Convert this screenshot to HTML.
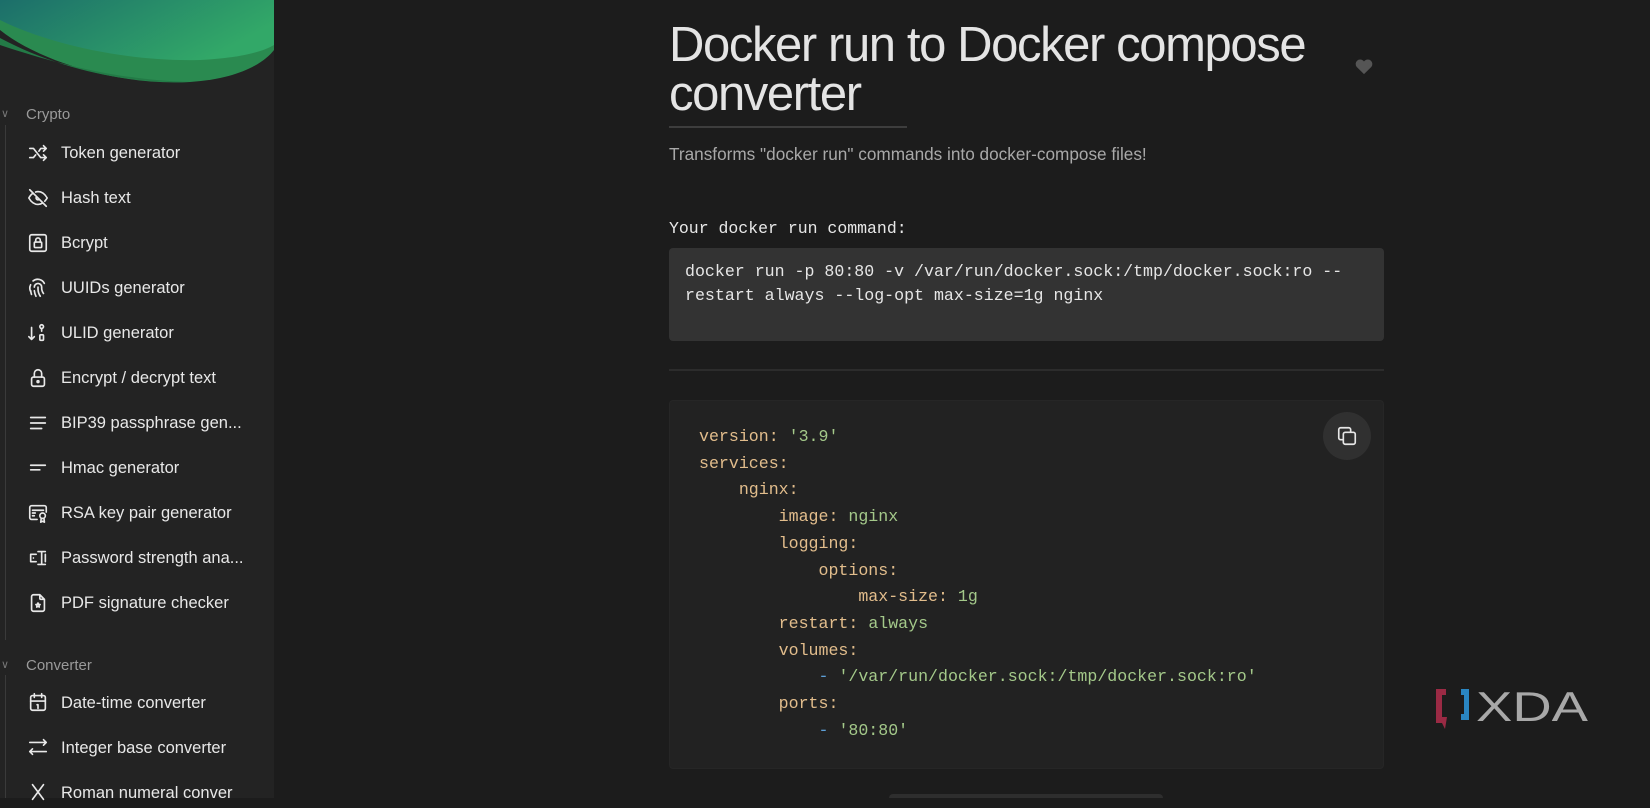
<!DOCTYPE html>
<html><head><meta charset="utf-8"><style>
*{margin:0;padding:0;box-sizing:border-box}
body{width:1650px;height:798px;overflow:hidden;background:#1c1c1c;font-family:"Liberation Sans",sans-serif;color:#e6e6e6;position:relative}
.side{position:absolute;left:0;top:0;width:274px;height:798px;background:#232323}
.vl{position:absolute;left:5px;width:1px;background:#3a3a3a}
.hd{position:absolute;left:26px;font-size:15px;color:#9a9a9a}
.chev{position:absolute;left:1px;font-size:11px;color:#777}
.it{position:absolute;left:61px;font-size:16.5px;color:#e8e8e8;white-space:nowrap}
.ic{position:absolute;left:27px;width:22px;height:22px}
.ic svg{width:22px;height:22px;fill:none;stroke:#e8e8e8;stroke-width:1.8;stroke-linecap:round;stroke-linejoin:round}
.mono{font-family:"Liberation Mono","DejaVu Sans Mono",monospace}
.k{color:#e2bd8c}.s{color:#a4c98a}.d{color:#5ea0d8}
</style></head><body>
<div class="side">
<svg width="274" height="90" style="position:absolute;left:0;top:0">
<defs><linearGradient id="g" x1="0" y1="0" x2="1" y2="0.4"><stop offset="0" stop-color="#1c6e6a"/><stop offset="1" stop-color="#32a868"/></linearGradient></defs>
<path d="M0 30 C40 62 120 86 190 82 C240 79 265 62 274 50 L274 0 L0 0Z" fill="#2a8a50"/>
<path d="M0 20 C50 45 130 62 200 60 C240 58 262 52 274 45 L274 0 L0 0Z" fill="url(#g)"/>
<path d="M0 38 C60 70 130 84 190 82 C120 80 60 65 0 45Z" fill="#237a46"/>
</svg>
<div class="vl" style="top:125px;height:515px"></div>
<div class="vl" style="top:675px;height:123px"></div>
<div class="chev" style="top:107px">&#8744;</div><div class="hd" style="top:106px">Crypto</div>
<div class="ic" style="top:142px"><svg viewBox="0 0 24 24"><path d="M3 7h4l8 10h5M3 17h4l2.5-3M13 10l2-3h5M18 4l3 3-3 3M18 14l3 3-3 3"/></svg></div><div class="it" style="top:144px">Token generator</div>
<div class="ic" style="top:187px"><svg viewBox="0 0 24 24"><path d="M3 3l18 18M10.5 10.6a2 2 0 002.9 2.8M9.4 5.5A9 9 0 0112 5c4 0 7.3 2.3 10 7-.8 1.4-1.7 2.5-2.6 3.5M6.6 6.6C4.8 7.8 3.3 9.6 2 12c2.7 4.7 6 7 10 7 1.7 0 3.3-.4 4.7-1.3"/></svg></div><div class="it" style="top:189px">Hash text</div>
<div class="ic" style="top:232px"><svg viewBox="0 0 24 24"><rect x="3" y="3" width="18" height="18" rx="2"/><rect x="8" y="11" width="8" height="6" rx="1"/><path d="M9.5 11V9a2.5 2.5 0 015 0v2"/></svg></div><div class="it" style="top:234px">Bcrypt</div>
<div class="ic" style="top:277px"><svg viewBox="0 0 24 24"><path d="M18.9 7A8 8 0 006.6 4.3M4 8.5A8 8 0 004 16M8 11a4 4 0 018 0v1a10 10 0 002 6M12 11v2a14 14 0 002.5 8M8 15a18 18 0 001.8 6M4.9 19a22 22 0 01-.9-4"/></svg></div><div class="it" style="top:279px">UUIDs generator</div>
<div class="ic" style="top:322px"><svg viewBox="0 0 24 24"><path d="M5 6v13M2 16l3 3 3-3M16 3a2 2 0 110 4h-1M16 3a2 2 0 000 4v3M15 14h2a1 1 0 011 1v4a1 1 0 01-1 1h-2a1 1 0 01-1-1v-4a1 1 0 011-1z"/></svg></div><div class="it" style="top:324px">ULID generator</div>
<div class="ic" style="top:367px"><svg viewBox="0 0 24 24"><rect x="5" y="11" width="14" height="10" rx="2"/><circle cx="12" cy="16" r="1"/><path d="M8 11V7a4 4 0 018 0v4"/></svg></div><div class="it" style="top:369px">Encrypt / decrypt text</div>
<div class="ic" style="top:412px"><svg viewBox="0 0 24 24"><path d="M4 6h16M4 12h16M4 18h12"/></svg></div><div class="it" style="top:414px">BIP39 passphrase gen...</div>
<div class="ic" style="top:457px"><svg viewBox="0 0 24 24"><path d="M4 9h16M4 14h10"/></svg></div><div class="it" style="top:459px">Hmac generator</div>
<div class="ic" style="top:502px"><svg viewBox="0 0 24 24"><path d="M11 19H5a2 2 0 01-2-2V6a2 2 0 012-2h14a2 2 0 012 2v5M6 9h12M6 12h3M6 15h2"/><circle cx="17" cy="15" r="3"/><path d="M15.5 18l-.5 4 2-1 2 1-.5-4"/></svg></div><div class="it" style="top:504px">RSA key pair generator</div>
<div class="ic" style="top:547px"><svg viewBox="0 0 24 24"><path d="M12 5h8M16 5v14M12 19h8M10 8H4v8h6M7 12h.01M20 8v8"/></svg></div><div class="it" style="top:549px">Password strength ana...</div>
<div class="ic" style="top:592px"><svg viewBox="0 0 24 24"><path d="M14 3v4a1 1 0 001 1h4M17 21H7a2 2 0 01-2-2V5a2 2 0 012-2h7l5 5v11a2 2 0 01-2 2z"/><path d="M12 12l.7 1.5 1.6.2-1.2 1.1.3 1.6-1.4-.8-1.4.8.3-1.6-1.2-1.1 1.6-.2z"/></svg></div><div class="it" style="top:594px">PDF signature checker</div>
<div class="chev" style="top:658px">&#8744;</div><div class="hd" style="top:657px">Converter</div>
<div class="ic" style="top:691px"><svg viewBox="0 0 24 24"><rect x="4" y="5" width="16" height="16" rx="2"/><path d="M16 3v4M8 3v4M4 11h16M11 15h1v4"/></svg></div><div class="it" style="top:694px">Date-time converter</div>
<div class="ic" style="top:736px"><svg viewBox="0 0 24 24"><path d="M21 7H3M18 10l3-3-3-3M6 20l-3-3 3-3M3 17h18"/></svg></div><div class="it" style="top:739px">Integer base converter</div>
<div class="ic" style="top:781px"><svg viewBox="0 0 24 24"><path d="M6 4l12 16M18 4L6 20"/></svg></div><div class="it" style="top:784px">Roman numeral conver</div>
</div>

<div style="position:absolute;left:669px;top:21px;font-size:49px;line-height:49px;color:#e4e4e4;letter-spacing:-1.4px">Docker run to Docker compose<br>converter</div>
<svg style="position:absolute;left:1354px;top:57px" width="20" height="18" viewBox="0 0 24 22"><path d="M12 21l-9-9a5.5 5.5 0 018-7.5l1 1 1-1a5.5 5.5 0 018 7.5z" fill="#555"/></svg>
<div style="position:absolute;left:669px;top:126px;width:238px;height:2px;background:#3d3d3d"></div>
<div style="position:absolute;left:669px;top:144px;font-size:17.2px;color:#a8a8a8">Transforms "docker run" commands into docker-compose files!</div>
<div class="mono" style="position:absolute;left:669px;top:219px;font-size:16.5px;color:#e8e8e8">Your docker run command:</div>
<div class="mono" style="position:absolute;left:669px;top:248px;width:715px;height:93px;background:#333;border-radius:4px;padding:12px 16px;font-size:16.6px;line-height:24px;color:#e6e6e6;white-space:pre">docker run -p 80:80 -v /var/run/docker.sock:/tmp/docker.sock:ro --
restart always --log-opt max-size=1g nginx</div>
<div style="position:absolute;left:669px;top:369px;width:715px;height:2px;background:#2c2c2c"></div>
<div class="mono" style="position:absolute;left:669px;top:400px;width:715px;height:369px;background:#222;border:1px solid #262626;border-radius:4px;padding:23px 29px;font-size:16.6px;line-height:26.7px;white-space:pre;color:#ddd"><span class="k">version:</span> <span class="s">'3.9'</span>
<span class="k">services:</span>
    <span class="k">nginx:</span>
        <span class="k">image:</span> <span class="s">nginx</span>
        <span class="k">logging:</span>
            <span class="k">options:</span>
                <span class="k">max-size:</span> <span class="s">1g</span>
        <span class="k">restart:</span> <span class="s">always</span>
        <span class="k">volumes:</span>
            <span class="d">-</span> <span class="s">'/var/run/docker.sock:/tmp/docker.sock:ro'</span>
        <span class="k">ports:</span>
            <span class="d">-</span> <span class="s">'80:80'</span></div>
<div style="position:absolute;left:1323px;top:412px;width:48px;height:48px;border-radius:50%;background:#303030"></div>
<svg style="position:absolute;left:1336px;top:425px" width="22" height="22" viewBox="0 0 24 24" fill="none" stroke="#e6e6e6" stroke-width="1.8"><rect x="8" y="8" width="13" height="13" rx="2"/><path d="M16 8V5a2 2 0 00-2-2H5a2 2 0 00-2 2v9a2 2 0 002 2h3"/></svg>
<div style="position:absolute;left:889px;top:794px;width:274px;height:4px;background:#2e2e2e;border-radius:4px 4px 0 0"></div>
<svg style="position:absolute;left:1434px;top:686px" width="160" height="46" viewBox="0 0 160 46">
<path d="M2 3h10v6H8v22h5l-2 12-3-6H2z" fill="#9a2a44"/>
<path d="M27 3h8v31h-8v-6h3V9h-3z" fill="#2a86c2"/>
<text x="42" y="35" font-family="Liberation Sans" font-size="42" fill="#a8a8a8" textLength="112" lengthAdjust="spacingAndGlyphs">XDA</text>
</svg>
</body></html>
